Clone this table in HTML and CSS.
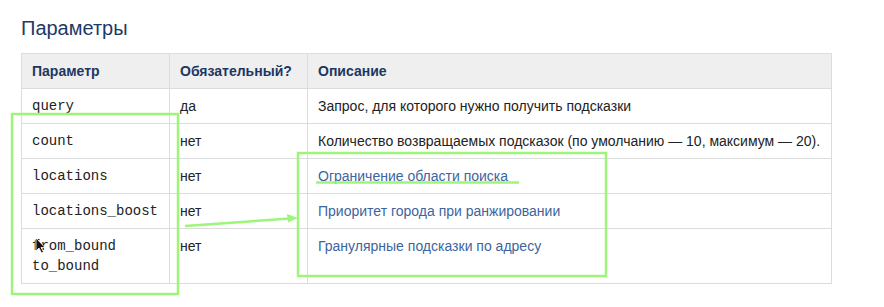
FILE: index.html
```html
<!DOCTYPE html>
<html lang="ru">
<head>
<meta charset="utf-8">
<link rel="stylesheet" href="styles.css">
</head>
<body>
<div class="page">
  <h2 class="title">Параметры</h2>
  <table class="params">
    <colgroup><col class="c1"><col class="c2"><col></colgroup>
    <thead>
      <tr><th>Параметр</th><th>Обязательный?</th><th>Описание</th></tr>
    </thead>
    <tbody>
      <tr><td class="mono"><code>query</code></td><td>да</td><td>Запрос, для которого нужно получить подсказки</td></tr>
      <tr><td class="mono"><code>count</code></td><td>нет</td><td>Количество возвращаемых подсказок (по умолчанию — 10, максимум — 20).</td></tr>
      <tr><td class="mono"><code>locations</code></td><td>нет</td><td><a href="#">Ограничение области поиска</a></td></tr>
      <tr><td class="mono"><code>locations_boost</code></td><td>нет</td><td><a href="#">Приоритет города при ранжировании</a></td></tr>
      <tr><td class="mono"><code>from_bound</code><br><code>to_bound</code></td><td>нет</td><td><a href="#">Гранулярные подсказки по адресу</a></td></tr>
    </tbody>
  </table>
  <svg class="marks" width="884" height="307" viewBox="0 0 884 307">
    <g fill="none" stroke="#9ef57a" stroke-width="2.5">
      <rect x="12" y="114" width="166" height="180"/>
      <rect x="298" y="153" width="308" height="123"/>
      <line x1="316" y1="182.5" x2="519" y2="182.5"/>
      <path d="M185 226 L290 218.5"/>
    </g>
    <path d="M287 214 L298 218 L288 222.5 Z" fill="#9ef57a"/>
    <path d="M36 238 L36 251 L39 248 L41.5 253 L43.5 252 L41 247.5 L45 247.5 Z" fill="#111" stroke="#fff" stroke-width="0.8"/>
  </svg>
</div>
</body>
</html>
```
FILE: styles.css
```css
html, body { margin: 0; padding: 0; background: #fff; }
.page {
  position: relative;
  width: 884px;
  height: 307px;
  padding: 0 0 0 21px;
  box-sizing: border-box;
  font-family: "Liberation Sans", Arial, sans-serif;
  color: #222;
}
.title {
  margin: 0;
  padding-top: 16px;
  font-size: 20px;
  line-height: 24px;
  font-weight: normal;
  color: #1d3a66;
  height: 37px;
}
.params {
  border-collapse: collapse;
  table-layout: fixed;
  width: 811px;
  font-size: 14px;
  line-height: 20px;
}
.params .c1 { width: 148px; }
.params .c2 { width: 138px; }
.params th, .params td {
  height: 20px;
  border: 1px solid #dcdcdc;
  padding: 7px 10px;
  text-align: left;
  vertical-align: top;
  white-space: nowrap;
}
.params th {
  background: #efefef;
  font-weight: bold;
  color: #1d3763;
}
.params td.mono {
  font-family: "Liberation Mono", "Courier New", monospace;
  font-size: 14px;
  line-height: 20px;
}
.params code {
  font-family: inherit;
  font-size: inherit;
  color: #222;
}
.params a {
  color: #3d64a0;
  text-decoration: none;
}
.marks {
  position: absolute;
  left: 0;
  top: 0;
  pointer-events: none;
}
```
